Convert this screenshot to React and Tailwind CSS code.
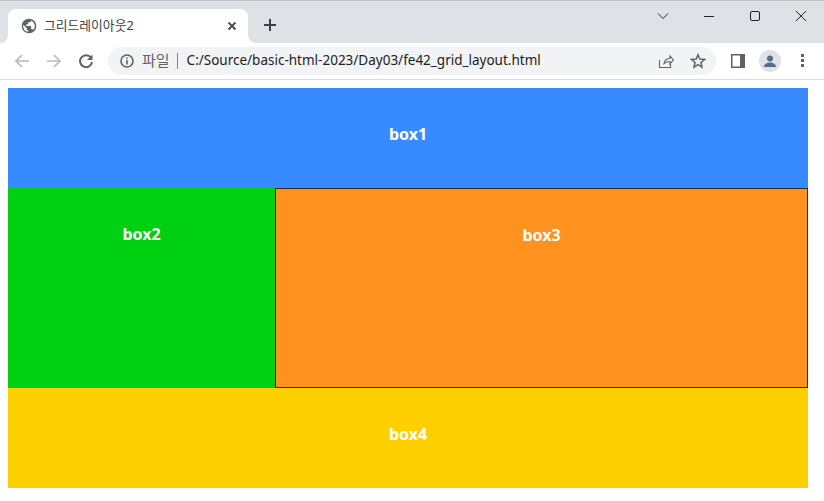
import React from "react";

const sans = { fontFamily: '"Noto Sans", "Noto Sans CJK KR", sans-serif' };

function Icon({ children, className = "", w = 16, h = 16, vb }) {
  return (
    <svg width={w} height={h} viewBox={vb || `0 0 ${w} ${h}`} className={`shrink-0 ${className}`} fill="none">
      {children}
    </svg>
  );
}

function Globe() {
  return (
    <Icon w={16} h={16} vb="0 0 24 24">
      <path
        fill="#5f6368"
        d="M12 1a11 11 0 1 0 0 22 11 11 0 0 0 0-22Zm-1.2 19.7A8.9 8.9 0 0 1 3.2 12c0-.7.1-1.3.2-2l5.2 5.3v1.1c0 1.2 1 2.2 2.2 2.2v2.1Zm7.6-2.8c-.3-.9-1.100-1.500-2.100-1.500h-1.100v-3.300c0-.6-.5-1.100-1.100-1.100H7.500V9.800h2.200c.6 0 1.100-.5 1.100-1.100V6.500H13c1.200 0 2.200-1 2.200-2.200v-.5a8.900 8.900 0 0 1 3.200 14.100Z"
      />
    </Icon>
  );
}

function Box({ label, className }) {
  return (
    <div className={`text-center text-white font-bold text-base leading-[92px] ${className}`}>{label}</div>
  );
}

export default function App() {
  return (
    <div className="w-[824px] h-[501px] bg-white overflow-hidden flex flex-col" style={sans}>
      {/* Tab strip */}
      <div className="h-[43px] bg-[#dee1e6] border-t border-[#bfc1c4] flex items-start shrink-0">
        <div className="ml-2 mt-2 w-[240px] h-[34px] bg-white rounded-t-lg flex items-center pl-[13px] pr-[8px] relative">
          <span className="absolute left-[-8px] bottom-0 w-2 h-2 bg-white">
            <span className="block w-2 h-2 bg-[#dee1e6] rounded-br-lg" />
          </span>
          <span className="absolute right-[-8px] bottom-0 w-2 h-2 bg-white">
            <span className="block w-2 h-2 bg-[#dee1e6] rounded-bl-lg" />
          </span>
          <Globe />
          <span className="ml-[7px] text-[12.8px] text-[#3c4043] flex-1">그리드레이아웃2</span>
          <Icon w={16} h={16}>
            <path d="M4.500 4.500l7 7M11.500 4.500l-7 7" stroke="#45484c" strokeWidth="1.800" />
          </Icon>
        </div>
        <div className="ml-[14px] mt-[16px]">
          <Icon w={16} h={16}>
            <path d="M8 2v12M2 8h12" stroke="#3c4043" strokeWidth="2" />
          </Icon>
        </div>
        <div className="ml-auto flex items-center h-[30px] mt-0">
          <Icon w={12} h={12} className="mr-[34px]">
            <path d="M1 3.500l5 5 5-5" stroke="#222" strokeWidth="1" />
          </Icon>
          <Icon w={12} h={12} className="mr-[34px]">
            <path d="M1 6.500h10" stroke="#222" strokeWidth="1" />
          </Icon>
          <Icon w={12} h={12} className="mr-[34px]">
            <rect x="1.500" y="1.500" width="9" height="9" rx="1.500" stroke="#222" strokeWidth="1" />
          </Icon>
          <Icon w={12} h={12} className="mr-[17px]">
            <path d="M1 1l10 10M11 1L1 11" stroke="#222" strokeWidth="1" />
          </Icon>
        </div>
      </div>

      {/* Toolbar */}
      <div className="h-[37px] bg-white border-b border-[#dadce0] flex items-center shrink-0 pb-[1px]">
        <div className="ml-[14px] flex items-center gap-4">
          <Icon w={16} h={16}>
            <path d="M15 8H2M8 2L2 8l6 6" stroke="#bababa" strokeWidth="1.700" />
          </Icon>
          <Icon w={16} h={16}>
            <path d="M1 8h13M8 2l6 6-6 6" stroke="#bababa" strokeWidth="1.700" />
          </Icon>
          <Icon w={16} h={16}>
            <path d="M13 4.800A6 6 0 1 0 14 9" stroke="#5f6368" strokeWidth="2" />
            <path d="M14.500 1.500v5.500H9z" fill="#5f6368" />
          </Icon>
        </div>
        <div className="ml-[14px] w-[608px] h-7 rounded-full bg-[#f1f3f4] flex items-center pl-[11px]">
          <Icon w={16} h={16}>
            <circle cx="8" cy="8" r="6" stroke="#5f6368" strokeWidth="1.600" />
            <path d="M8 7v4.500M8 4.500v1.500" stroke="#5f6368" strokeWidth="1.600" />
          </Icon>
          <span className="ml-[7px] text-[15px] text-[#5f6368]">파일</span>
          <span className="ml-[7px] w-px h-4 bg-[#80868b]" />
          <span className="ml-[9px] text-[13.5px] text-[#202124]">C:/Source/basic-html-2023/Day03/fe42_grid_layout.html</span>
          <div className="ml-auto flex items-center gap-4 pr-[10px]">
            <Icon w={16} h={16}>
              <path d="M1.500 7v7.500h11V11M6 10.500c.5-3 3-5 6-5V3l3.500 4-3.500 3.800V8.500c-2.500 0-4.500.5-6 2Z" stroke="#5f6368" strokeWidth="1.100" />
            </Icon>
            <Icon w={16} h={16}>
              <path d="M8 1.800l1.800 4.300 4.700.4-3.500 3 1 4.600L8 11.700l-4 2.400 1-4.600-3.500-3 4.700-.4z" stroke="#5f6368" strokeWidth="1.500" />
            </Icon>
          </div>
        </div>
        <div className="ml-[15px]">
          <Icon w={14} h={14}>
            <path d="M0 0h14v14H0z" fill="#5f6368" />
            <path d="M1.500 1.500h7.500v11H1.500z" fill="#fff" />
          </Icon>
        </div>
        <div className="ml-[14px] w-[22px] h-[22px] rounded-full bg-[#dee1e6] flex items-center justify-center">
          <Icon w={14} h={14}>
            <circle cx="7" cy="4.500" r="3" fill="#5b6a85" />
            <path d="M1 13c0-3 3-4.500 6-4.500s6 1.500 6 4.500z" fill="#5b6a85" />
          </Icon>
        </div>
        <div className="ml-[20px] flex flex-col gap-[2px]">
          <span className="w-[3px] h-[3px] bg-[#5f6368]" />
          <span className="w-[3px] h-[3px] bg-[#5f6368]" />
          <span className="w-[3px] h-[3px] bg-[#5f6368]" />
        </div>
      </div>

      {/* Page */}
      <div className="m-2 w-[800px] grid grid-cols-[267px_533px] grid-rows-[100px_200px_100px]">
        <Box label="box1" className="col-span-2 bg-[#388bff]" />
        <Box label="box2" className="bg-[#00d012]" />
        <Box label="box3" className="bg-[#ff921e] border border-[#3a2a14]" />
        <Box label="box4" className="col-span-2 bg-[#ffd000]" />
      </div>
    </div>
  );
}
